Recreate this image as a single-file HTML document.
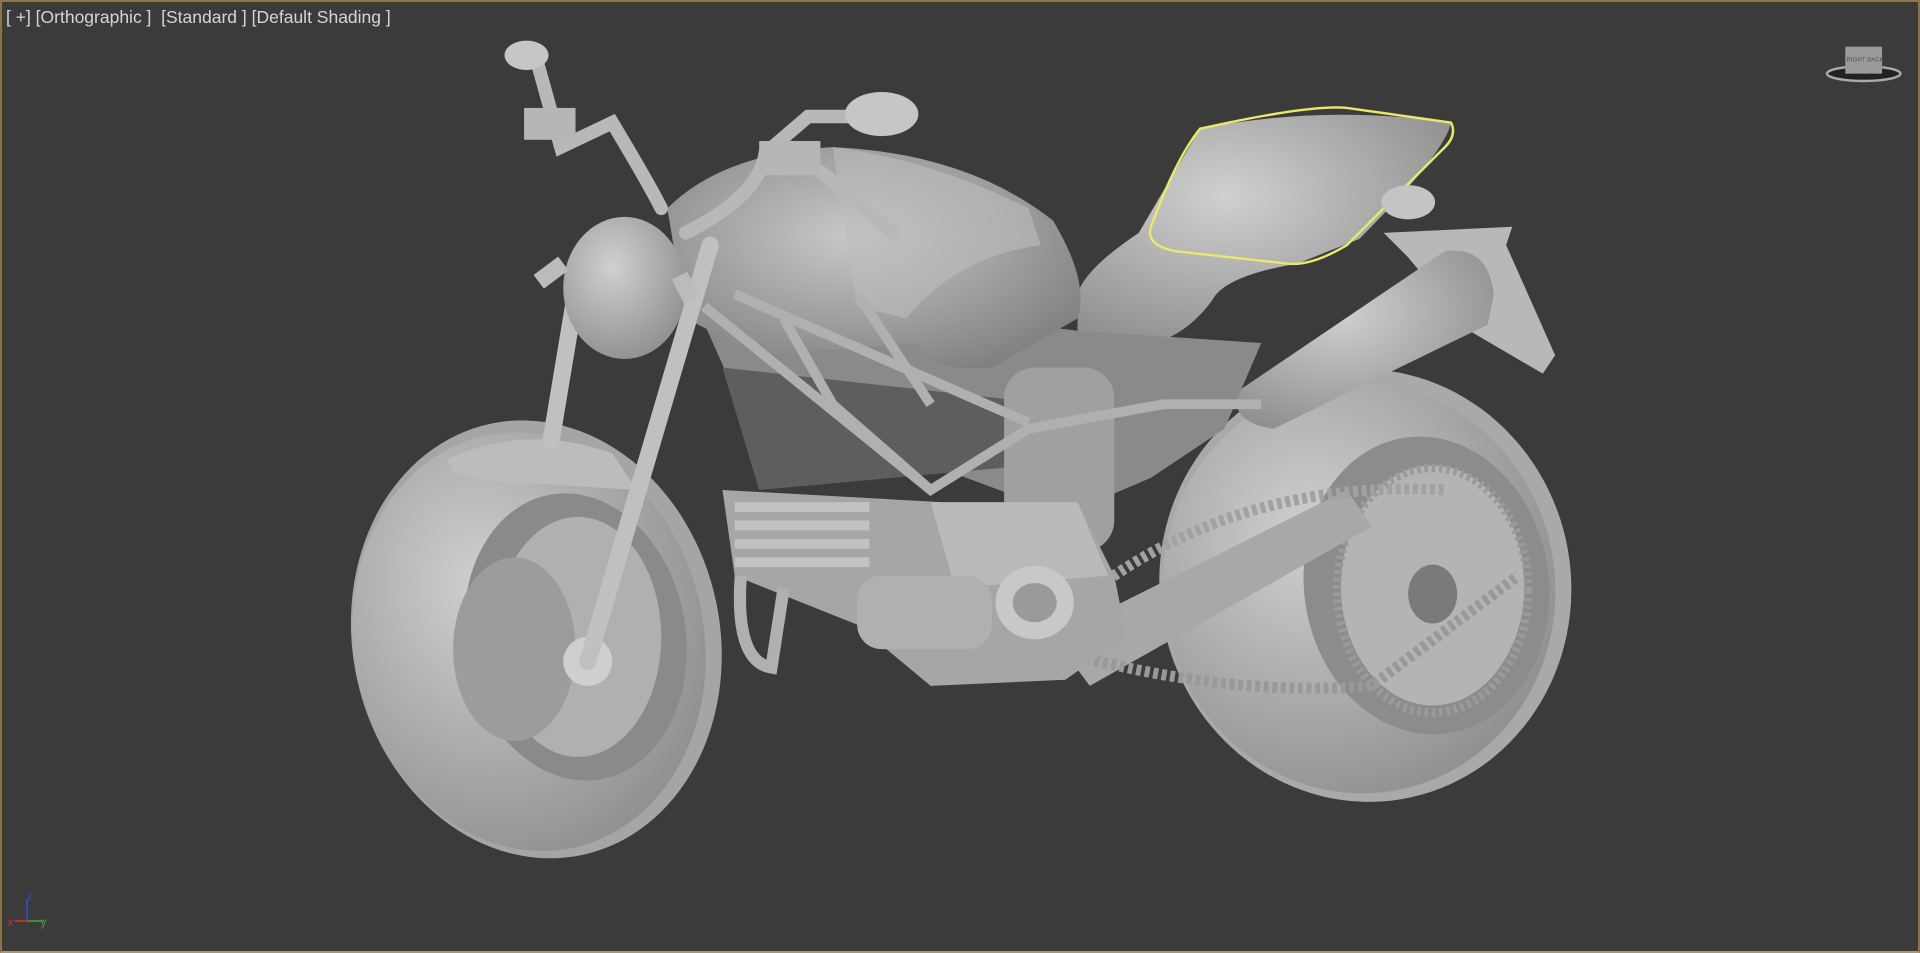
<!DOCTYPE html>
<html><head><meta charset="utf-8"><style>
html,body{margin:0;padding:0;width:1920px;height:953px;overflow:hidden;background:#3b3b3b}
.vp{position:absolute;left:0;top:0;width:1916px;height:949px;border:2px solid #8a7548;border-bottom-color:#a89870}
.lbl{position:absolute;left:6px;top:7px;font:17.5px "Liberation Sans",sans-serif;color:#d6d6d6;letter-spacing:0;white-space:pre}
svg{position:absolute;left:0;top:0}
</style></head><body>
<div class="vp"></div>
<svg width="1920" height="953" viewBox="0 0 1568 778">
<defs>
<radialGradient id="g1" cx="40%" cy="35%" r="70%"><stop offset="0" stop-color="#d0d0d0"/><stop offset="1" stop-color="#8f8f8f"/></radialGradient>
<radialGradient id="g2" cx="45%" cy="40%" r="70%"><stop offset="0" stop-color="#c8c8c8"/><stop offset="1" stop-color="#7d7d7d"/></radialGradient>
</defs>
<ellipse cx="1115" cy="478" rx="168" ry="177" transform="rotate(-10 1115 478)" fill="#a9a9a9"/>
<ellipse cx="1110" cy="480" rx="160" ry="168" transform="rotate(-10 1110 480)" fill="url(#g1)"/>
<ellipse cx="1165" cy="478" rx="100" ry="122" transform="rotate(-8 1165 478)" fill="#8c8c8c"/>
<ellipse cx="1170" cy="478" rx="75" ry="98" fill="#b4b4b4"/>
<ellipse cx="1170" cy="485" rx="20" ry="24" fill="#7a7a7a"/>
<ellipse cx="1170" cy="482" rx="78" ry="100" fill="none" stroke="#9a9a9a" stroke-width="7" stroke-dasharray="3 3"/>
<path d="M1130 190 L1235 185 L1230 200 L1270 290 L1260 305 L1200 270 L1150 210 Z" fill="#b8b8b8"/>
<path d="M1010 320 L1180 205 Q1215 200 1220 240 L1215 265 L1040 350 Q1005 345 1010 320 Z" fill="url(#g1)"/>
<path d="M860 520 L1100 400 L1120 430 L890 560 Z" fill="#a8a8a8"/>
<path d="M860 530 Q1000 570 1120 560 L1240 470" fill="none" stroke="#999" stroke-width="9" stroke-dasharray="4 3"/>
<path d="M870 500 Q1000 390 1180 400" fill="none" stroke="#a2a2a2" stroke-width="9" stroke-dasharray="4 3"/>
<path d="M880 255 Q870 230 930 190 L980 105 Q1080 85 1185 100 Q1180 125 1110 195 L1060 215 Q1000 225 990 245 Q950 300 880 275 Z" fill="url(#g1)"/>
<path d="M940 185 Q960 130 980 105 Q1070 85 1100 88 L1185 100 Q1190 110 1180 120 L1100 200 Q1070 218 1050 215 L960 205 Q935 200 940 185 Z" fill="none" stroke="#e8e86a" stroke-width="2"/>
<ellipse cx="1150" cy="165" rx="22" ry="14" fill="#c4c4c4"/>
<path d="M560 230 L880 270 L1030 280 L1000 350 L940 390 L870 420 L600 320 Z" fill="#8a8a8a"/>
<path d="M590 300 L860 330 L840 380 L620 400 Z" fill="#5e5e5e"/>
<path d="M545 170 Q590 125 680 120 Q790 125 860 180 Q890 230 880 260 L810 300 Q760 305 750 280 L620 290 L560 260 Z" fill="url(#g2)"/>
<path d="M680 120 Q760 130 840 170 L850 200 Q780 210 740 260 L700 250 Z" fill="#bdbdbd" opacity=".6"/>
<rect x="820" y="300" width="90" height="150" rx="25" fill="#a0a0a0"/>
<path d="M590 400 L770 410 L880 410 L910 470 L920 520 L870 555 L760 560 L700 510 L600 470 Z" fill="#a6a6a6"/>
<g fill="#c2c2c2"><rect x="600" y="410" width="110" height="8"/><rect x="600" y="425" width="110" height="8"/><rect x="600" y="440" width="110" height="8"/><rect x="600" y="455" width="110" height="8"/></g>
<path d="M760 410 L880 410 L905 470 L780 480 Z" fill="#bababa"/>
<ellipse cx="845" cy="492" rx="32" ry="30" fill="#c8c8c8"/>
<ellipse cx="845" cy="492" rx="18" ry="16" fill="#9a9a9a"/>
<rect x="700" y="470" width="110" height="60" rx="20" fill="#b0b0b0"/>
<path d="M605 470 Q600 540 630 545 L640 480" fill="none" stroke="#b0b0b0" stroke-width="10"/>
<g stroke="#b0b0b0" stroke-width="8" fill="none">
<path d="M575 250 L760 400 L840 350 L950 330 L1030 330"/>
<path d="M600 240 L840 345"/><path d="M640 260 L680 330 L760 400"/><path d="M700 240 L760 330"/>
</g>
<ellipse cx="438" cy="522" rx="150" ry="180" transform="rotate(-12 438 522)" fill="#a5a5a5"/>
<ellipse cx="432" cy="524" rx="143" ry="172" transform="rotate(-12 432 524)" fill="url(#g1)"/>
<ellipse cx="470" cy="520" rx="90" ry="118" transform="rotate(-10 470 520)" fill="#8a8a8a"/>
<ellipse cx="472" cy="520" rx="68" ry="98" fill="#b0b0b0"/>
<ellipse cx="420" cy="530" rx="50" ry="75" fill="#9c9c9c"/>
<ellipse cx="480" cy="540" rx="20" ry="20" fill="#cfcfcf"/>
<path d="M365 375 Q430 345 500 370 L520 400 L440 395 Q400 395 370 385 Z" fill="#bcbcbc"/>
<g stroke="#c0c0c0" stroke-width="14" stroke-linecap="round"><line x1="580" y1="200" x2="480" y2="540"/><line x1="470" y1="240" x2="450" y2="360"/></g>
<ellipse cx="510" cy="235" rx="50" ry="58" fill="url(#g1)"/>
<path d="M460 215 L440 230 M555 225 L565 245" stroke="#bbb" stroke-width="14"/>
<g stroke="#b8b8b8" stroke-width="11" fill="none" stroke-linecap="round">
<path d="M440 55 L458 120 L500 100 Q530 150 540 170"/>
<path d="M560 190 Q620 160 625 125 L660 95 L700 95"/>
<path d="M670 140 L730 190"/>
</g>
<ellipse cx="430" cy="45" rx="18" ry="12" fill="#c6c6c6"/>
<ellipse cx="720" cy="93" rx="30" ry="18" fill="#c6c6c6"/>
<rect x="428" y="88" width="42" height="26" fill="#b6b6b6"/>
<rect x="620" y="115" width="50" height="28" fill="#b6b6b6"/>
<ellipse cx="1522" cy="60" rx="30" ry="6" fill="#222" stroke="#aaa" stroke-width="2"/>
<rect x="1507" y="38" width="30" height="22" fill="#9a9a9a"/>
<text x="1508" y="50" font-family="Liberation Sans" font-size="5" fill="#555">RIGHT BACK</text>
<line x1="22" y1="752" x2="22" y2="734" stroke="#3a4ab0" stroke-width="1.5"/>
<line x1="22" y1="752" x2="36" y2="752" stroke="#3a9a3a" stroke-width="1.5"/>
<line x1="22" y1="752" x2="12" y2="752" stroke="#c03030" stroke-width="1.5"/>
<text x="22" y="735" font-family="Liberation Sans" font-size="10" fill="#3a4ab0">z</text>
<text x="33" y="756" font-family="Liberation Sans" font-size="10" fill="#3a9a3a">y</text>
<text x="6" y="756" font-family="Liberation Sans" font-size="10" fill="#c03030">x</text>
</svg>
<div class="lbl">[ +] [Orthographic ]  [Standard ] [Default Shading ]</div>
</body></html>
